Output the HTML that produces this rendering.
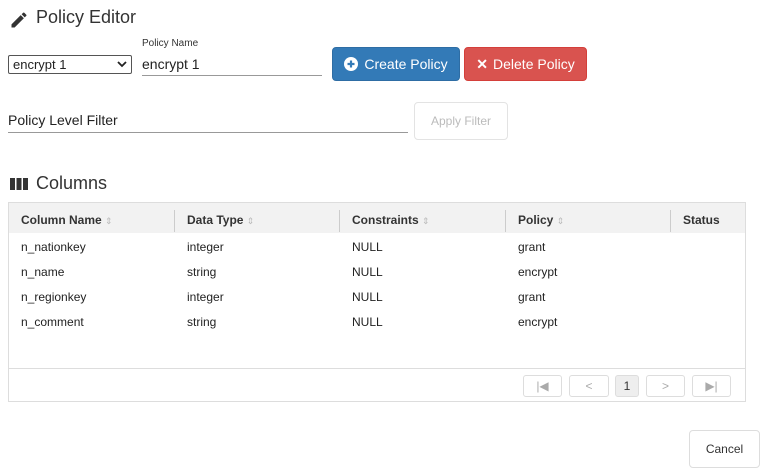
<!DOCTYPE html>
<html><head><style>
*{box-sizing:border-box;margin:0;padding:0}
body{width:769px;height:475px;background:#fff;font-family:"Liberation Sans",sans-serif;color:#222;position:relative;overflow:hidden}
.a{position:absolute}
.btn{position:absolute;border-radius:4px;font-size:14px;display:flex;align-items:center;justify-content:center}
.th{position:absolute;top:206px;height:29px;line-height:29px;font-size:12px;font-weight:bold;color:#333}
.sep{position:absolute;top:210px;width:1px;height:22px;background:#ccc}
.td{position:absolute;font-size:12px;color:#222}
.pg{position:absolute;top:375px;height:22px;border:1px solid #ddd;border-radius:3px;color:#aaa;font-size:12px;display:flex;align-items:center;justify-content:center}
.sort{color:#bbb;font-size:9px;font-weight:normal}
</style></head><body>
<svg class="a" style="left:9px;top:10px" width="20" height="20" viewBox="0 0 24 24"><path fill="#333" d="M3 17.25V21h3.75L17.81 9.94l-3.75-3.75L3 17.25zM20.71 7.04a1 1 0 0 0 0-1.41l-2.34-2.34a1 1 0 0 0-1.41 0l-1.83 1.83 3.75 3.75 1.83-1.83z"/></svg>
<div class="a" style="left:36px;top:7px;font-size:18px;color:#333">Policy Editor</div>
<div class="a" style="left:8px;top:55px;width:124px;height:19px;border:1px solid #555;border-radius:2px;font-size:13px;padding-left:4px;line-height:17px">encrypt 1<svg class="a" style="right:4px;top:5px" width="10" height="7" viewBox="0 0 10 7"><path d="M1 1l4 4 4-4" stroke="#222" stroke-width="1.8" fill="none"/></svg></div>
<div class="a" style="left:142px;top:38px;font-size:10px;color:#333">Policy Name</div>
<div class="a" style="left:142px;top:56px;font-size:14px;color:#222">encrypt 1</div>
<div class="a" style="left:142px;top:75px;width:180px;height:1px;background:#999"></div>
<div class="btn" style="left:332px;top:47px;width:128px;height:34px;background:#337ab7;color:#fff;border:1px solid #2e6da4"><svg width="14" height="14" viewBox="0 0 14 14" style="margin-right:6px"><circle cx="7" cy="7" r="7" fill="#fff"/><path d="M7 3.5v7M3.5 7h7" stroke="#337ab7" stroke-width="2.2"/></svg>Create Policy</div>
<div class="btn" style="left:464px;top:47px;width:123px;height:34px;background:#d9534f;color:#fff;border:1px solid #d43f3a"><span style="font-weight:bold;margin-right:5px">✕</span>Delete Policy</div>
<div class="a" style="left:8px;top:112px;font-size:14px;color:#222">Policy Level Filter</div>
<div class="a" style="left:8px;top:132px;width:400px;height:1px;background:#999"></div>
<div class="btn" style="left:414px;top:102px;width:94px;height:38px;border:1px solid #e3e3e3;color:#bbb;font-size:12px">Apply Filter</div>
<svg class="a" style="left:10px;top:178px" width="18" height="12" viewBox="0 0 18 12"><rect x="0" y="0" width="5" height="12" fill="#333"/><rect x="6.5" y="0" width="5" height="12" fill="#333"/><rect x="13" y="0" width="5" height="12" fill="#333"/></svg>
<div class="a" style="left:36px;top:173px;font-size:18px;color:#333">Columns</div>
<div class="a" style="left:8px;top:202px;width:738px;height:200px;border:1px solid #ddd"></div>
<div class="a" style="left:9px;top:203px;width:736px;height:30px;background:#f2f2f2"></div>
<div class="th" style="left:21px">Column Name <span class="sort">⇕</span></div>
<div class="th" style="left:187px">Data Type <span class="sort">⇕</span></div>
<div class="th" style="left:352px">Constraints <span class="sort">⇕</span></div>
<div class="th" style="left:518px">Policy <span class="sort">⇕</span></div>
<div class="th" style="left:683px">Status</div>
<div class="sep" style="left:174px"></div><div class="sep" style="left:339px"></div><div class="sep" style="left:505px"></div><div class="sep" style="left:670px"></div>
<div class="td" style="left:21px;top:240px">n_nationkey</div><div class="td" style="left:187px;top:240px">integer</div><div class="td" style="left:352px;top:240px">NULL</div><div class="td" style="left:518px;top:240px">grant</div>
<div class="td" style="left:21px;top:265px">n_name</div><div class="td" style="left:187px;top:265px">string</div><div class="td" style="left:352px;top:265px">NULL</div><div class="td" style="left:518px;top:265px">encrypt</div>
<div class="td" style="left:21px;top:290px">n_regionkey</div><div class="td" style="left:187px;top:290px">integer</div><div class="td" style="left:352px;top:290px">NULL</div><div class="td" style="left:518px;top:290px">grant</div>
<div class="td" style="left:21px;top:315px">n_comment</div><div class="td" style="left:187px;top:315px">string</div><div class="td" style="left:352px;top:315px">NULL</div><div class="td" style="left:518px;top:315px">encrypt</div>
<div class="a" style="left:9px;top:368px;width:736px;height:1px;background:#ddd"></div>
<div class="pg" style="left:523px;width:39px">|◀</div>
<div class="pg" style="left:569px;width:40px">&lt;</div>
<div class="pg" style="left:615px;width:24px;background:#eee;color:#333">1</div>
<div class="pg" style="left:646px;width:39px">&gt;</div>
<div class="pg" style="left:692px;width:39px">▶|</div>
<div class="btn" style="left:689px;top:430px;width:71px;height:38px;border:1px solid #ddd;color:#333;font-size:12px">Cancel</div>
</body></html>
